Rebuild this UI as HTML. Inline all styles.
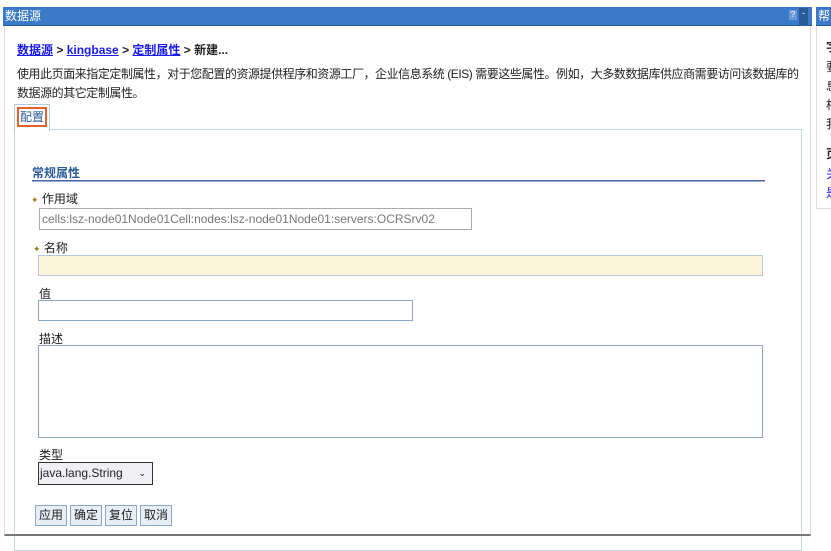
<!DOCTYPE html>
<html><head><meta charset="utf-8"><style>
body{margin:0;width:831px;height:536px;overflow:hidden;background:#fff;font-family:"Liberation Sans","Noto Sans CJK SC",sans-serif;font-size:12px;color:#222;position:relative}
.a{position:absolute}
.bar{background:#3a7ac8;color:#fff;font-size:12px;line-height:18px;border-bottom:1px solid #2a5a98}
a{color:#1a1aee;text-decoration:underline;font-weight:bold}
.lbl{font-size:12px;color:#222}
.star{color:#a07a20;font-size:9px}
.btn{position:absolute;top:505px;height:21px;line-height:19px;border:1px solid #8aa8c8;background:#e8eef6;font-size:12px;padding:0 3px;box-sizing:border-box}
</style></head><body>
<div class="a" style="left:14px;top:129px;width:786px;height:420px;border:1px solid #c8d4e6"></div>
<div class="a" style="left:4px;top:26px;width:805px;height:508px;border-left:1px solid #ddd;border-right:1px solid #ddd;border-bottom:2px solid #777"></div>
<div class="a bar" style="left:3px;top:7px;width:807px;height:18px;padding-left:2px">数据源</div>
<div class="a" style="left:789px;top:10px;width:8px;height:10px;background:#6a9ad8;color:#fff;font-size:8px;line-height:10px;text-align:center">?</div>
<div class="a" style="left:799px;top:8px;width:9px;height:17px;background:#2a5a98;color:#fff;font-size:9px;line-height:10px;text-align:center">-</div>
<div class="a bar" style="left:816px;top:7px;width:20px;height:18px;padding-left:2px">帮助</div>
<div class="a" style="left:816px;top:26px;width:20px;height:182px;border-left:1px solid #ddd;border-bottom:1px solid #ddd"></div>
<div class="a" style="left:826px;top:38px;font-size:12px;line-height:19px;font-weight:bold">字</div>
<div class="a" style="left:826px;top:58px;font-size:12px;line-height:19px">要<br>息<br>相<br>我</div>
<div class="a" style="left:826px;top:145px;font-weight:bold">页</div>
<div class="a" style="left:826px;top:165px;color:#1a1aee;line-height:19px">关<br>是</div>

<div class="a" style="left:17px;top:41px;font-weight:bold"><a>数据源</a> &gt; <a>kingbase</a> &gt; <a>定制属性</a> &gt; 新建...</div>
<div class="a" style="left:17px;top:65px;white-space:nowrap;line-height:19px;letter-spacing:-0.45px">使用此页面来指定定制属性，对于您配置的资源提供程序和资源工厂，企业信息系统 (EIS) 需要这些属性。例如，大多数数据库供应商需要访问该数据库的<br>数据源的其它定制属性。</div>
<div class="a" style="left:14px;top:104px;width:34px;height:26px;border:1px solid #b8c8e0;border-bottom:none;background:#fff;z-index:2"></div>
<div class="a" style="left:17px;top:107px;height:20px;border:2px solid #e06030;color:#2a5a98;line-height:17px;text-align:center;z-index:3;box-sizing:border-box;width:30px">配置</div>
<div class="a" style="left:32px;top:164px;color:#2a5a98;font-weight:bold">常规属性</div>
<div class="a" style="left:32px;top:180px;width:733px;height:1px;background:#3a6aa0;border-bottom:1px solid #aac"></div>
<div class="a lbl" style="left:31px;top:190px"><span class="star">✦</span> 作用域</div>
<div class="a" style="left:39px;top:208px;width:433px;height:22px;border:1px solid #aaa;color:#777;line-height:20px;padding-left:2px;box-sizing:border-box">cells:lsz-node01Node01Cell:nodes:lsz-node01Node01:servers:OCRSrv02</div>
<div class="a lbl" style="left:33px;top:239px"><span class="star">✦</span> 名称</div>
<div class="a" style="left:38px;top:255px;width:725px;height:21px;border:1px solid #b8c8d8;background:#fdf4dc;box-sizing:border-box"></div>
<div class="a lbl" style="left:39px;top:285px">值</div>
<div class="a" style="left:38px;top:300px;width:375px;height:21px;border:1px solid #8aa8c8;box-sizing:border-box"></div>
<div class="a lbl" style="left:39px;top:330px">描述</div>
<div class="a" style="left:38px;top:345px;width:725px;height:93px;border:1px solid #8aa8c8;box-sizing:border-box"></div>
<div class="a lbl" style="left:39px;top:446px">类型</div>
<div class="a" style="left:38px;top:462px;width:115px;height:23px;border:1px solid #333;background:#f0f0f4;line-height:21px;box-sizing:border-box;padding-left:1px">java.lang.String<span style="position:absolute;right:6px;font-size:9px">⌄</span></div>
<div class="btn" style="left:35px">应用</div>
<div class="btn" style="left:70px">确定</div>
<div class="btn" style="left:105px">复位</div>
<div class="btn" style="left:140px">取消</div>
</body></html>
